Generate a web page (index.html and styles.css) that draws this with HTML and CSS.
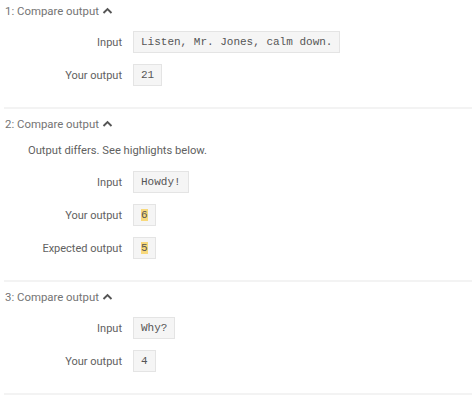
FILE: index.html
```html
<!DOCTYPE html>
<html>
<head>
<meta charset="utf-8">
<link rel="stylesheet" href="styles.css">
</head>
<body>
<section class="test first">
  <div class="head">1: Compare output <svg class="chev" width="11" height="7" viewBox="0 0 11 7"><polyline points="1.5,6 5.5,2 9.5,6" fill="none" stroke="#555" stroke-width="1.9"/></svg></div>
  <div class="row"><span class="label">Input</span><span class="box">Listen, Mr. Jones, calm down.</span></div>
  <div class="row"><span class="label">Your output</span><span class="box">21</span></div>
</section>
<section class="test">
  <div class="head">2: Compare output <svg class="chev" width="11" height="7" viewBox="0 0 11 7"><polyline points="1.5,6 5.5,2 9.5,6" fill="none" stroke="#555" stroke-width="1.9"/></svg></div>
  <div class="msg">Output differs. See highlights below.</div>
  <div class="row"><span class="label">Input</span><span class="box">Howdy!</span></div>
  <div class="row"><span class="label">Your output</span><span class="box"><span class="hl">6</span></span></div>
  <div class="row"><span class="label">Expected output</span><span class="box"><span class="hl">5</span></span></div>
</section>
<section class="test">
  <div class="head">3: Compare output <svg class="chev" width="11" height="7" viewBox="0 0 11 7"><polyline points="1.5,6 5.5,2 9.5,6" fill="none" stroke="#555" stroke-width="1.9"/></svg></div>
  <div class="row"><span class="label">Input</span><span class="box">Why?</span></div>
  <div class="row"><span class="label">Your output</span><span class="box">4</span></div>
</section>
</body>
</html>
```
FILE: styles.css
```css
html, body {
  margin: 0;
  padding: 0;
  background: #fff;
}
body {
  font-family: Roboto, "Liberation Sans", sans-serif;
  font-size: 11px;
  color: #5f5f5f;
}
.test {
  margin: 0 2px 0 4px;
  padding-bottom: 21px;
  border-bottom: 2px solid #f3f3f3;
}
.head {
  display: flex;
  align-items: center;
  padding: 5px 0 0 1px;
  height: 20px;
  line-height: 20px;
  margin-bottom: 10px;
  color: #747474;
  font-size: 11.4px;
}
.first .head {
  padding-top: 1px;
}
.chev {
  margin-left: 3px;
  margin-top: -1px;
}
.msg {
  line-height: 20px;
  margin: -3px 0 10px 24px;
  color: #616161;
  font-size: 11.2px;
}
.row {
  display: flex;
  align-items: center;
  height: 22px;
  margin-bottom: 11px;
}
.row:last-child {
  margin-bottom: 0;
}
.label {
  width: 118px;
  margin-right: 11px;
  text-align: right;
  color: #616161;
}
.box {
  box-sizing: border-box;
  height: 22px;
  line-height: 20px;
  padding: 0 7px;
  border: 1px solid #e4e4e4;
  background: #f5f5f5;
  font-family: "Liberation Mono", "Courier New", monospace;
  font-size: 11px;
  color: #555;
}
.hl {
  background: #f8d97c;
}
```
